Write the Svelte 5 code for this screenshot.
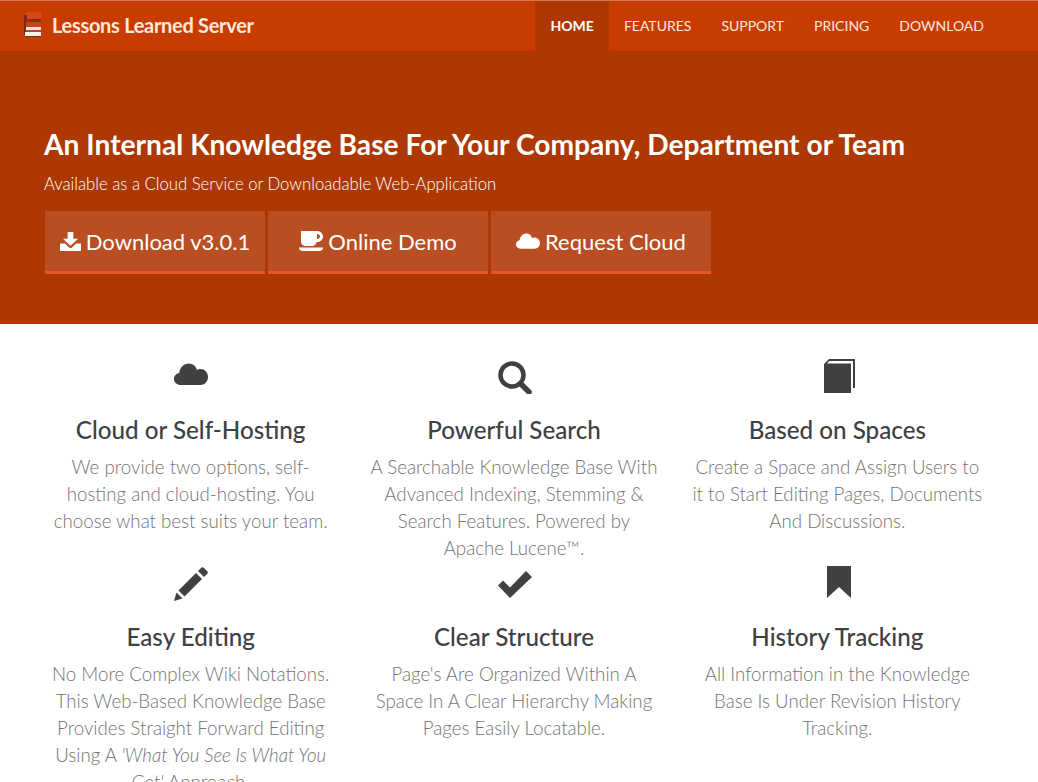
<script>
  const links = ["Home", "Features", "Support", "Pricing", "Download"];

  const features = [
    { icon: "cloud", title: "Cloud or Self-Hosting", text: "We provide two options, self-hosting and cloud-hosting. You choose what best suits your team." },
    { icon: "search", title: "Powerful Search", text: "A Searchable Knowledge Base With Advanced Indexing, Stemming & Search Features. Powered by Apache Lucene™." },
    { icon: "book", title: "Based on Spaces", text: "Create a Space and Assign Users to it to Start Editing Pages, Documents And Discussions." },
    { icon: "pencil", title: "Easy Editing", text: "No More Complex Wiki Notations. This Web-Based Knowledge Base Provides Straight Forward Editing Using A", quote: "'What You See Is What You Got'", after: " Approach." },
    { icon: "check", title: "Clear Structure", text: "Page's Are Organized Within A Space In A Clear Hierarchy Making Pages Easily Locatable." },
    { icon: "bookmark", title: "History Tracking", text: "All Information in the Knowledge Base Is Under Revision History Tracking." }
  ];
</script>

{#snippet cloudPath()}
  <path d="M7 22C3 22 0 19.500 0 16C0 12.800 2.300 10.500 5.200 10.100C5.800 4.500 10 0.500 14.500 0.500C18.800 0.500 22 3.300 23 7C24 6.300 25.200 6 26.300 6C30.500 6 34 9.500 34 14C34 18.500 30.500 22 26.500 22Z" />
{/snippet}

<header class="navbar">
  <a class="brand" href="#top">
    <svg class="logo" viewBox="0 0 18 26" width="18" height="26">
      <rect x="2" y="0" width="15" height="7" fill="#d9461a" />
      <rect x="0" y="3" width="3" height="20" fill="#7a2a10" />
      <rect x="2" y="7" width="15" height="3" fill="#8e2d10" />
      <rect x="2" y="10" width="15" height="5" fill="#c2451a" />
      <rect x="2" y="15" width="15" height="3" fill="#f4e4da" />
      <rect x="2" y="18" width="15" height="2" fill="#a8492a" />
      <rect x="1" y="20" width="16" height="4" fill="#f6efe9" />
      <rect x="1" y="24" width="16" height="1" fill="#6e2a14" />
    </svg>
    <span>Lessons Learned Server</span>
  </a>
  <nav>
    {#each links as link, i}
      <a href="#top" class:active={i === 0}>{link}</a>
    {/each}
  </nav>
</header>

<section class="hero">
  <h1>An Internal Knowledge Base For Your Company, Department or Team</h1>
  <p>Available as a Cloud Service or Downloadable Web-Application</p>
  <div class="actions">
    <a class="btn" href="#top">
      <svg viewBox="0 0 22 20" width="21" height="19">
        <path d="M8 0H14V7H19L11 14.500L3 7H8Z" />
        <path d="M0 12H5L9.500 16.300Q11 17.500 12.500 16.300L17 12H22V20H0Z" />
      </svg>
      Download v3.0.1
    </a>
    <a class="btn" href="#top">
      <svg viewBox="0 0 24 20" width="24" height="20">
        <path fill-rule="evenodd" d="M2 0H18C21.500 0 24 2.500 24 5.500C24 8.500 21.500 11 18 11H17.800C17 13.500 15 15 13 15H6.500C4 15 2 13 2 10.500ZM18 3V8C20 8 21 7 21 5.500C21 4 20 3 18 3Z" />
        <path d="M0 16.500H24C24 18.500 22.500 20 20.500 20H3.500C1.500 20 0 18.500 0 16.500Z" />
      </svg>
      Online Demo
    </a>
    <a class="btn" href="#top">
      <svg viewBox="0 0 34 22" width="24" height="18">
        {@render cloudPath()}
      </svg>
      Request Cloud
    </a>
  </div>
</section>

<main class="features">
  {#each features as f}
    <article class="feature">
      <div class="icon">
        {#if f.icon === "cloud"}
          <svg viewBox="0 0 34 22" width="34" height="22" class="i-cloud">{@render cloudPath()}</svg>
        {:else if f.icon === "search"}
          <svg viewBox="0 0 34 33" width="34" height="33" class="i-search">
            <circle cx="14" cy="14" r="11.500" fill="none" stroke="#3f4042" stroke-width="4.500" />
            <path d="M23.500 23.500L31 31" stroke="#3f4042" stroke-width="5.500" stroke-linecap="round" />
          </svg>
        {:else if f.icon === "book"}
          <svg viewBox="0 0 32 34" width="32" height="34" class="i-book">
            <path d="M5 0H31V29H29V2H5.500L3 4.500H27V34H0V5Z" />
          </svg>
        {:else if f.icon === "pencil"}
          <svg viewBox="0 0 34 34" width="34" height="34" class="i-pencil">
            <path d="M0 34L2.500 25.500L8.500 31.500Z" />
            <path d="M4.500 23.500L22 6L28 12L10.500 29.500Z" />
            <path d="M24 4L27.500 0.500Q28.500 0 29.500 0.500L33.500 4.500Q34 5.500 33.500 6.500L30 10Z" />
          </svg>
        {:else if f.icon === "check"}
          <svg viewBox="0 0 34 27" width="34" height="27" class="i-check">
            <path d="M0 14.500L5 9.500L12 16.500L28 0L34 6L12 27Z" />
          </svg>
        {:else}
          <svg viewBox="0 0 24 32" width="24" height="32" class="i-bookmark">
            <path d="M0 0H24V32L12 21L0 32Z" />
          </svg>
        {/if}
      </div>
      <h2>{f.title}</h2>
      <p>{f.text}{#if f.quote}{" "}<em>{f.quote}</em>{f.after}{/if}</p>
    </article>
  {/each}
</main>

<style>
  :global(body) {
    margin: 0;
    font-family: Lato, "Liberation Sans", sans-serif;
    background: #fff;
    overflow-x: hidden;
  }

  a {
    text-decoration: none;
    color: inherit;
  }

  .navbar {
    display: flex;
    justify-content: space-between;
    height: 50px;
    padding-right: 39px;
    background: #c93c00;
    border-top: 1px solid #d67a55;
  }

  .brand {
    display: flex;
    align-items: center;
    gap: 10px;
    padding: 0 0 3px 24px;
    color: #fbe9df;
    font-size: 20px;
    font-weight: 700;
    letter-spacing: -0.3px;
  }

  .logo {
    margin-top: 1px;
  }

  nav {
    display: flex;
  }

  nav a {
    display: flex;
    align-items: center;
    padding: 0 15px 2px;
    color: #fbe9df;
    font-size: 14px;
    text-transform: uppercase;
  }

  nav a.active {
    background: #ad3803;
    color: #fff;
    font-weight: 700;
  }

  .hero {
    height: 273px;
    box-sizing: border-box;
    padding: 74px 45px 0 44px;
    background: #ad3803;
    color: #fff;
  }

  .hero h1 {
    margin: 0;
    font-size: 28.2px;
    line-height: 38px;
    font-weight: 700;
  }

  .hero p {
    margin: 9px 0 0;
    font-size: 16.7px;
    line-height: 24px;
    font-weight: 300;
  }

  .actions {
    display: flex;
    gap: 3px;
    margin: 15px 0 0 1px;
  }

  .btn {
    display: flex;
    align-items: center;
    justify-content: center;
    gap: 5px;
    box-sizing: border-box;
    width: 220px;
    height: 63px;
    background: #b94e23;
    border-bottom: 3px solid #e8562a;
    font-size: 22px;
  }

  .btn svg {
    fill: #fff;
  }

  .features {
    display: grid;
    grid-template-columns: repeat(3, 1fr);
    grid-auto-rows: 207px;
    height: 458px;
    box-sizing: border-box;
    padding: 0 39px 0 29px;
    overflow: hidden;
    color: #3f4042;
  }

  .feature {
    padding: 0 15px;
    text-align: center;
  }

  .icon {
    display: flex;
    justify-content: center;
    align-items: flex-start;
    height: 86px;
    padding-top: 36px;
    box-sizing: border-box;
  }

  .icon svg {
    fill: #3f4042;
  }

  .i-cloud {
    margin-top: 3px;
  }

  .i-search {
    margin: 1px 0 0 3px;
  }

  .i-book {
    margin: -1px 0 0 5px;
  }

  .i-check {
    margin: 4px 0 0 3px;
  }

  .i-bookmark {
    margin: -1px 0 0 3px;
  }

  .feature h2 {
    margin: 0;
    font-size: 24.2px;
    line-height: 40px;
    font-weight: 500;
  }

  .feature p {
    margin: 4px 0 0;
    font-size: 18.7px;
    line-height: 27px;
    font-weight: 300;
    color: #737373;
  }
</style>
